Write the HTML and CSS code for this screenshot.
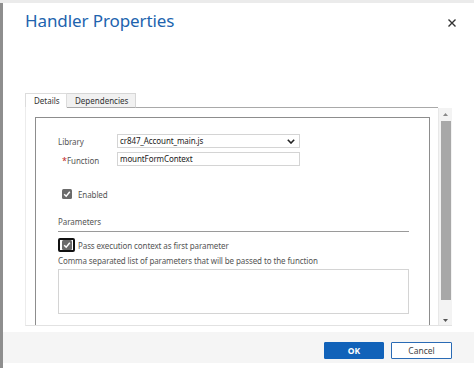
FILE: index.html
```html
<!DOCTYPE html>
<html>
<head>
<meta charset="utf-8">
<link rel="stylesheet" href="styles.css">
</head>
<body>
<div class="window">
  <div class="topstrip"></div>
  <div class="main">
    <div class="leftbar"></div>
    <div class="dialog">
      <header class="head">
        <h1 class="title">Handler Properties</h1>
        <button class="close" aria-label="Close">
          <svg width="8" height="8" viewBox="0 0 8 8"><path d="M0.5 0.5 L7.5 7.5 M7.5 0.5 L0.5 7.5" stroke="#333" stroke-width="1.4" fill="none"/></svg>
        </button>
      </header>
      <div class="tabs">
        <div class="tab active">Details</div>
        <div class="tab">Dependencies</div>
        <div class="tabfill"></div>
      </div>
      <div class="panel">
        <div class="viewport">
          <div class="inner">
            <div class="row">
              <span class="label">Library</span>
              <div class="select"><span>cr847_Account_main.js</span>
                <svg class="chev" width="8" height="5" viewBox="0 0 8 5"><path d="M0.8 0.8 L4 4 L7.2 0.8" stroke="#222" stroke-width="1.6" fill="none"/></svg>
              </div>
            </div>
            <div class="row">
              <span class="label fn"><span class="req">*</span>Function</span>
              <div class="input">mountFormContext</div>
            </div>
            <div class="check-row enabled">
              <span class="cb">
                <svg width="10" height="10" viewBox="0 0 10 10"><path d="M2.2 5.2 L4.2 7.2 L7.8 2.8" stroke="#fff" stroke-width="1.5" fill="none"/></svg>
              </span>
              <span class="cb-text">Enabled</span>
            </div>
            <div class="section">Parameters</div>
            <div class="check-row pass">
              <span class="focus">
                <span class="cb">
                  <svg width="10" height="10" viewBox="0 0 10 10"><path d="M2.2 5.2 L4.2 7.2 L7.8 2.8" stroke="#fff" stroke-width="1.5" fill="none"/></svg>
                </span>
              </span>
              <span class="cb-text">Pass execution context as first parameter</span>
            </div>
            <div class="hint">Comma separated list of parameters that will be passed to the function</div>
            <div class="textarea"></div>
          </div>
        </div>
        <div class="scrollbar">
          <svg class="arrow" width="5" height="3" viewBox="0 0 5 3"><path d="M0 3 L2.5 0 L5 3 Z" fill="#888"/></svg>
          <div class="thumb"></div>
          <svg class="arrow" width="5" height="3" viewBox="0 0 5 3"><path d="M0 0 L2.5 3 L5 0 Z" fill="#555"/></svg>
        </div>
      </div>
      <div class="footer">
        <button class="btn ok">OK</button>
        <button class="btn cancel">Cancel</button>
      </div>
    </div>
  </div>
</div>
</body>
</html>
```
FILE: styles.css
```css
* { box-sizing: border-box; }
html, body { margin: 0; padding: 0; background: #fff; }
body { width: 474px; height: 368px; overflow: hidden; font-family: "Noto Sans", "Open Sans", sans-serif; color: #333; }

.window { width: 474px; height: 368px; display: flex; flex-direction: column; }
.topstrip { height: 3px; background: #ebebeb; flex: none; }
.main { flex: 1; display: flex; }
.leftbar { width: 3px; background: #8e8e8e; flex: none; }
.dialog { flex: 1; display: flex; flex-direction: column; padding: 0 22px 0 22px; }

.head { height: 90px; display: flex; justify-content: space-between; align-items: flex-start; flex: none; }
.title { margin: 7px 0 0 0; font-size: 17px; line-height: 22px; font-weight: 400; color: #2163ae; letter-spacing: -0.1px; }
.close { margin: 16px -4px 0 0; padding: 0; border: 0; background: transparent; width: 8px; height: 8px; display: flex; }

.tabs { display: flex; height: 15px; flex: none; position: relative; z-index: 1; }
.tab { height: 15px; font-size: 8px; line-height: 13px; padding: 0 8px; border: 1px solid #d6d6d6; border-bottom: 1px solid #a9a9a9; background: #f1f1f1; color: #333; }
.tab.active { background: #fff; border-color: #dcdcdc; border-bottom-color: #fff; width: 42px; }
.tab + .tab { border-left: 0; width: 69px; }
.tabfill { flex: 1; border-bottom: 1px solid #a9a9a9; margin-right: 14px; }

.panel { height: 219px; margin-top: -1px; display: flex; border-left: 1px solid #ececec; border-bottom: 1px solid #e2e2e2; flex: none; }
.viewport { flex: 1; overflow: hidden; padding: 9px 0 0 9px; border-top: 1px solid transparent; }
.inner { width: 395px; height: 320px; border: 1px solid #8d8d8d; padding: 16px 0 0 22px; }

.row { display: flex; align-items: center; height: 14px; margin-bottom: 4px; }
.label { width: 59px; font-size: 8px; letter-spacing: -0.05px; color: #555; }
.label.fn { padding-left: 4px; padding-top: 3px; }
.req { color: #c0282d; font-size: 9px; }
.select, .input { width: 183px; height: 14px; border: 1px solid #d4d4d4; font-size: 8px; letter-spacing: -0.1px; line-height: 12px; padding: 0 2px; color: #222; display: flex; align-items: center; justify-content: space-between; }
.chev { margin-right: 2px; }

.check-row { display: flex; align-items: center; }
.enabled { margin-top: 22px; padding-left: 4px; height: 12px; }
.cb { width: 10px; height: 10px; background: #6b6b6b; border-radius: 1.5px; display: flex; }
.cb-text { font-size: 8px; letter-spacing: -0.1px; color: #555; margin-left: 6px; }

.section { margin-top: 15px; margin-right: 20px; font-size: 8px; letter-spacing: -0.05px; color: #555; height: 17px; line-height: 13px; border-bottom: 1px solid #9a9a9a; }
.pass { margin-top: 5px; height: 15px; }
.focus { width: 17px; height: 14px; border: 2px solid #111; border-radius: 2px; display: flex; align-items: center; justify-content: center; }
.pass .cb-text { margin-left: 3px; padding-top: 1px; }
.hint { font-size: 8px; letter-spacing: -0.1px; color: #555; margin-top: 3px; line-height: 12px; }
.textarea { margin-top: 2px; width: 351px; height: 45px; border: 1px solid #d4d4d4; }

.scrollbar { width: 14px; margin-left: 1px; margin-top: 1px; background: #f3f3f3; border-left: 1px solid #e8e8e8; display: flex; flex-direction: column; align-items: center; padding: 5px 0 3px 0; }
.arrow { flex: none; }
.thumb { width: 10px; flex: 1; background: #a8a8a8; margin: 5px 0 19px 0; }

.footer { height: 31px; margin: 6px -22px 0 -22px; background: #f5f5f5; display: flex; justify-content: flex-end; align-items: flex-start; padding: 10px 22px 0 0; gap: 7px; flex: none; }
.btn { height: 17px; font-family: inherit; font-size: 8.5px; padding: 0; border-radius: 1px; }
.ok { width: 60px; background: #1162b9; color: #fff; font-weight: 700; border: 1px solid #1162b9; }
.cancel { width: 61px; background: #fff; color: #444; border: 1px solid #2a6bb5; }
```
